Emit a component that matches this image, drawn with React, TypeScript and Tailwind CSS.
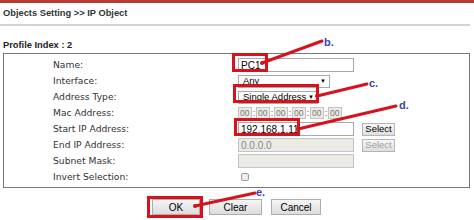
import React from "react";

const labelFont = { fontFamily: '"DejaVu Sans", Verdana, sans-serif' };
const arial = { fontFamily: '"Liberation Sans", Arial, sans-serif' };

const Row = ({ label, children }: { label: string; children?: React.ReactNode }) => (
  <div className="flex h-[16px] items-center">
    <span className="w-[185px] shrink-0 whitespace-nowrap text-[9.2px] text-[#333]">{label}</span>
    <div className="flex items-center">{children}</div>
  </div>
);

const TextBox = ({ value, disabled }: { value?: string; disabled?: boolean }) => (
  <div
    className={`flex h-[14px] w-[116px] items-center whitespace-nowrap border px-[2px] text-[10px] ${
      disabled
        ? "border-[#c4c4c4] bg-[#ebebe4] text-[#888]"
        : "border-[#a9a9a9] bg-white text-black"
    }`}
    style={arial}
  >
    {value}
  </div>
);

const SelectBox = ({ value, width }: { value: string; width: string }) => (
  <div
    className={`flex h-[13px] ${width} items-center justify-between whitespace-nowrap border border-[#a9a9a9] bg-white pl-[4px] pr-[3px] text-[9.5px] text-black`}
    style={arial}
  >
    <span>{value}</span>
    <span className="text-[6px] leading-none">▼</span>
  </div>
);

const SmallButton = ({ disabled }: { disabled?: boolean }) => (
  <div
    className={`ml-[8px] flex h-[13px] w-[33px] items-center justify-center border border-[#b5b5b5] bg-gradient-to-b from-[#f7f7f7] to-[#dedede] text-[9.5px] ${
      disabled ? "text-[#a0a0a0]" : "text-black"
    }`}
    style={arial}
  >
    Select
  </div>
);

const ActionButton = ({ label, width }: { label: string; width: string }) => (
  <div
    className={`flex h-[16px] ${width} items-center justify-center border border-[#adadad] bg-gradient-to-b from-[#f6f6f6] to-[#dcdcdc] text-[10px] text-black`}
    style={arial}
  >
    {label}
  </div>
);

const MacBoxes = () => (
  <div className="flex items-center" style={arial}>
    {[0, 1, 2, 3, 4, 5].map((i) => (
      <div key={i} className="flex items-center">
        {i > 0 && <span className="w-[4px] text-center text-[9px] leading-none text-[#555]">:</span>}
        <div className="flex h-[12px] w-[14px] items-center whitespace-nowrap border border-[#c4c4c4] bg-[#ebebe4] pl-[1px] text-[8.5px] text-[#777]">
          00
        </div>
      </div>
    ))}
  </div>
);

export default function App() {
  return (
    <div className="relative h-[220px] w-[474px] overflow-hidden bg-white" style={labelFont}>
      <div className="h-[3px] bg-[#b93a32]" />
      <div className="flex h-[21px] items-center px-[3px] text-[9.3px] font-bold text-[#333]" style={arial}>
        Objects Setting &gt;&gt; IP Object
      </div>
      <div className="mr-[4px] h-[2px] bg-[#d4d4d4]" />
      <div className="flex h-[27px] items-end px-[3px] text-[9.3px] font-bold text-[#222]" style={arial}>
        Profile Index : 2
      </div>
      <div className="ml-[3px] mr-[4px] border border-[#777] pb-[2px] pl-[49px] pt-[3px]">
        <Row label="Name:">
          <TextBox value="PC1" />
        </Row>
        <Row label="Interface:">
          <SelectBox value="Any" width="w-[92px]" />
        </Row>
        <Row label="Address Type:">
          <SelectBox value="Single Address" width="w-[80px]" />
        </Row>
        <Row label="Mac Address:">
          <MacBoxes />
        </Row>
        <Row label="Start IP Address:">
          <TextBox value="192.168.1.11" />
          <SmallButton />
        </Row>
        <Row label="End IP Address:">
          <TextBox value="0.0.0.0" disabled />
          <SmallButton disabled />
        </Row>
        <Row label="Subnet Mask:">
          <TextBox disabled />
        </Row>
        <Row label="Invert Selection:">
          <div className="ml-[3px] h-[8px] w-[8px] rounded-[2px] border border-[#a0a0a0] bg-[#ededed]" />
        </Row>
      </div>
      <div className="mt-[11px] flex gap-[9px] pl-[152px]">
        <ActionButton label="OK" width="w-[48px]" />
        <ActionButton label="Clear" width="w-[53px]" />
        <ActionButton label="Cancel" width="w-[50px]" />
      </div>

      {/* red highlight boxes */}
      <div className="pointer-events-none absolute left-[232px] top-[53px] h-[19px] w-[36px] border-[3px] border-[#d7121d]" />
      <div className="pointer-events-none absolute left-[233px] top-[84px] h-[19px] w-[86px] border-[3px] border-[#d7121d]" />
      <div className="pointer-events-none absolute left-[234px] top-[118px] h-[18px] w-[66px] border-[3px] border-[#d7121d]" />
      <div className="pointer-events-none absolute left-[147px] top-[196px] h-[22px] w-[56px] border-[3px] border-[#d7121d]" />

      {/* arrows */}
      <svg className="pointer-events-none absolute inset-0" width="474" height="220" viewBox="0 0 474 220">
        <g stroke="#d7121d" strokeWidth="3" strokeLinecap="round">
          <line x1="322" y1="41" x2="262" y2="63" />
          <line x1="367" y1="84" x2="317" y2="96" />
          <line x1="396" y1="106" x2="298" y2="129" />
          <line x1="255" y1="193" x2="195" y2="206" />
        </g>
        <g fill="#d7121d">
          <circle cx="262" cy="63" r="2" />
          <circle cx="317" cy="96" r="2" />
          <circle cx="298" cy="129" r="2" />
          <circle cx="195" cy="206" r="2" />
        </g>
      </svg>

      {/* labels */}
      <span className="absolute left-[324px] top-[37px] text-[11px] font-bold leading-none text-[#3b3fb5]" style={arial}>b.</span>
      <span className="absolute left-[369px] top-[78px] text-[11px] font-bold leading-none text-[#3b3fb5]" style={arial}>c.</span>
      <span className="absolute left-[399px] top-[100px] text-[11px] font-bold leading-none text-[#3b3fb5]" style={arial}>d.</span>
      <span className="absolute left-[256px] top-[187px] text-[11px] font-bold leading-none text-[#3b3fb5]" style={arial}>e.</span>
    </div>
  );
}
